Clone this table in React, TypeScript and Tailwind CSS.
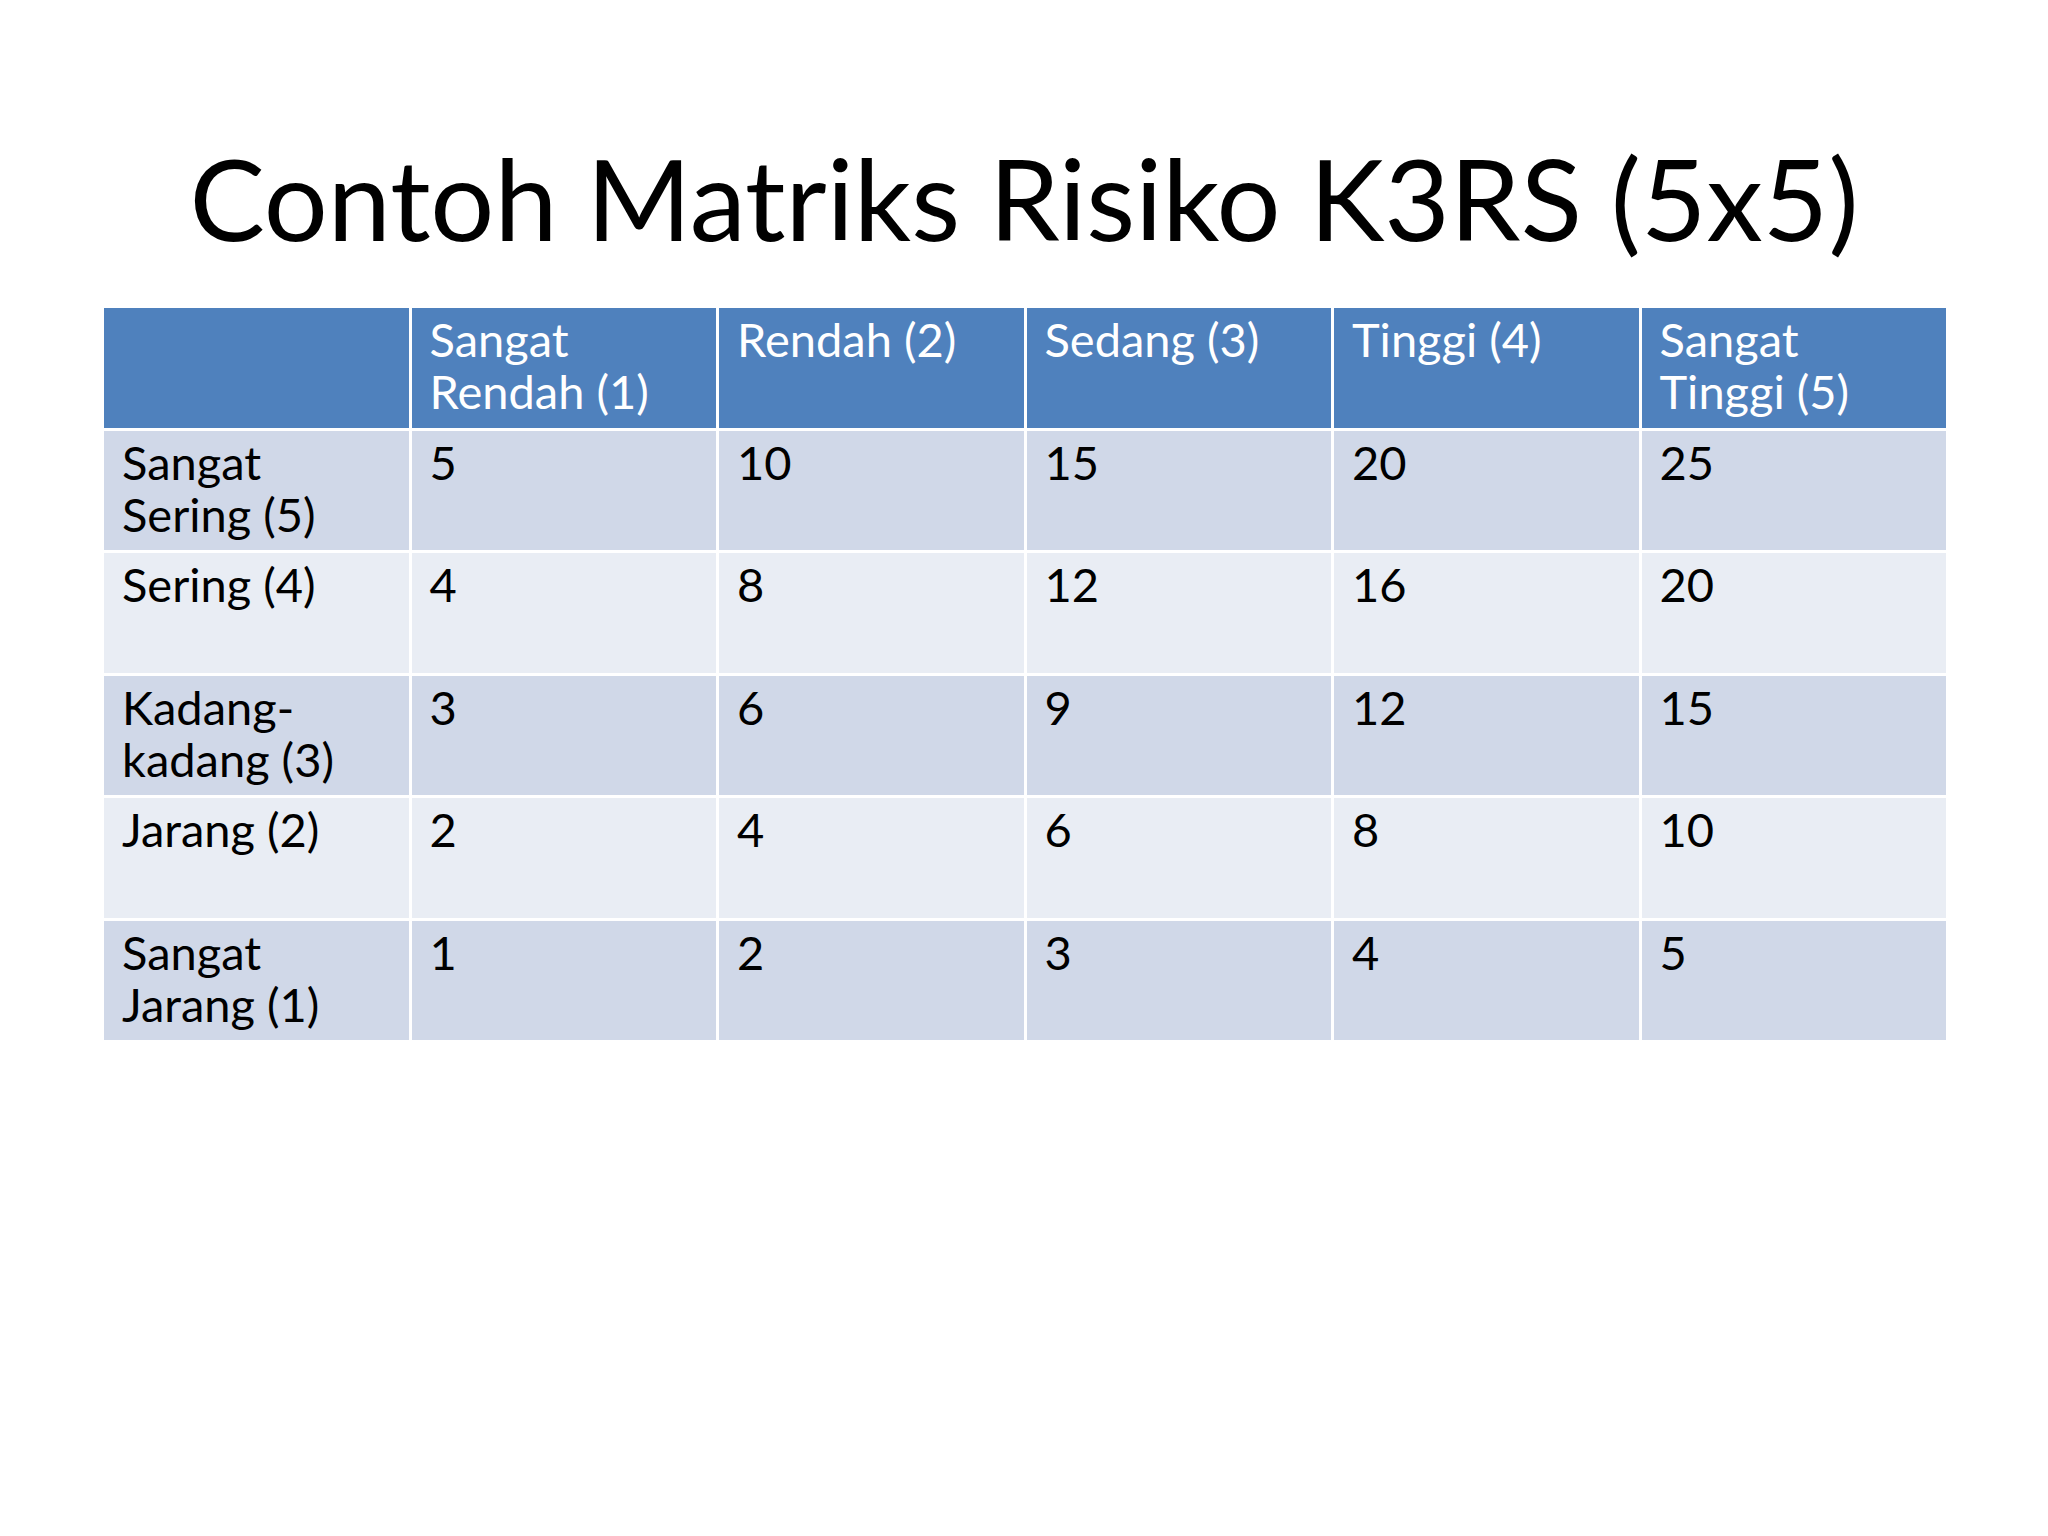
const header = ["", "Sangat Rendah (1)", "Rendah (2)", "Sedang (3)", "Tinggi (4)", "Sangat Tinggi (5)"];

const rows: { label: string; values: number[] }[] = [
  { label: "Sangat Sering (5)", values: [5, 10, 15, 20, 25] },
  { label: "Sering (4)", values: [4, 8, 12, 16, 20] },
  { label: "Kadang-kadang (3)", values: [3, 6, 9, 12, 15] },
  { label: "Jarang (2)", values: [2, 4, 6, 8, 10] },
  { label: "Sangat Jarang (1)", values: [1, 2, 3, 4, 5] },
];

// labels that break onto two lines in the slide
const split: Record<string, [string, string]> = {
  "Sangat Rendah (1)": ["Sangat", "Rendah (1)"],
  "Sangat Tinggi (5)": ["Sangat", "Tinggi (5)"],
  "Sangat Sering (5)": ["Sangat", "Sering (5)"],
  "Kadang-kadang (3)": ["Kadang-", "kadang (3)"],
  "Sangat Jarang (1)": ["Sangat", "Jarang (1)"],
};

function Label({ text }: { text: string }) {
  const parts = split[text];
  if (!parts) return <>{text}</>;
  return (
    <>
      {parts[0]}
      <br />
      {parts[1]}
    </>
  );
}

export default function App() {
  return (
    <div className="w-[2048px] h-[1536px] bg-white font-['Lato','Liberation_Sans',sans-serif] text-black">
      {/* Title */}
      <div className="pt-[141px] flex justify-center">
        <h1 className="text-[113px] leading-none font-normal">Contoh Matriks Risiko K3RS (5x5)</h1>
      </div>

      {/* Matrix */}
      <div className="mt-[51px] pl-[101px]">
        <table className="w-[1848px] table-fixed border-collapse text-[47px] leading-[52px]">
          <thead>
            <tr className="h-[122.5px] bg-[#4f81bd] text-white">
              {header.map((h, i) => (
                <th
                  key={i}
                  className="border-[3px] border-white align-top text-left font-normal pl-[18px] pr-[10px] pt-[5px]"
                >
                  <Label text={h} />
                </th>
              ))}
            </tr>
          </thead>
          <tbody>
            {rows.map((r, ri) => (
              <tr key={r.label} className={`h-[122.5px] ${ri % 2 === 0 ? "bg-[#d0d8e8]" : "bg-[#e9edf4]"}`}>
                <td className="border-[3px] border-white align-top pl-[18px] pr-[10px] pt-[5px]">
                  <Label text={r.label} />
                </td>
                {r.values.map((v, vi) => (
                  <td key={vi} className="border-[3px] border-white align-top pl-[18px] pr-[10px] pt-[5px]">
                    {v}
                  </td>
                ))}
              </tr>
            ))}
          </tbody>
        </table>
      </div>
    </div>
  );
}
